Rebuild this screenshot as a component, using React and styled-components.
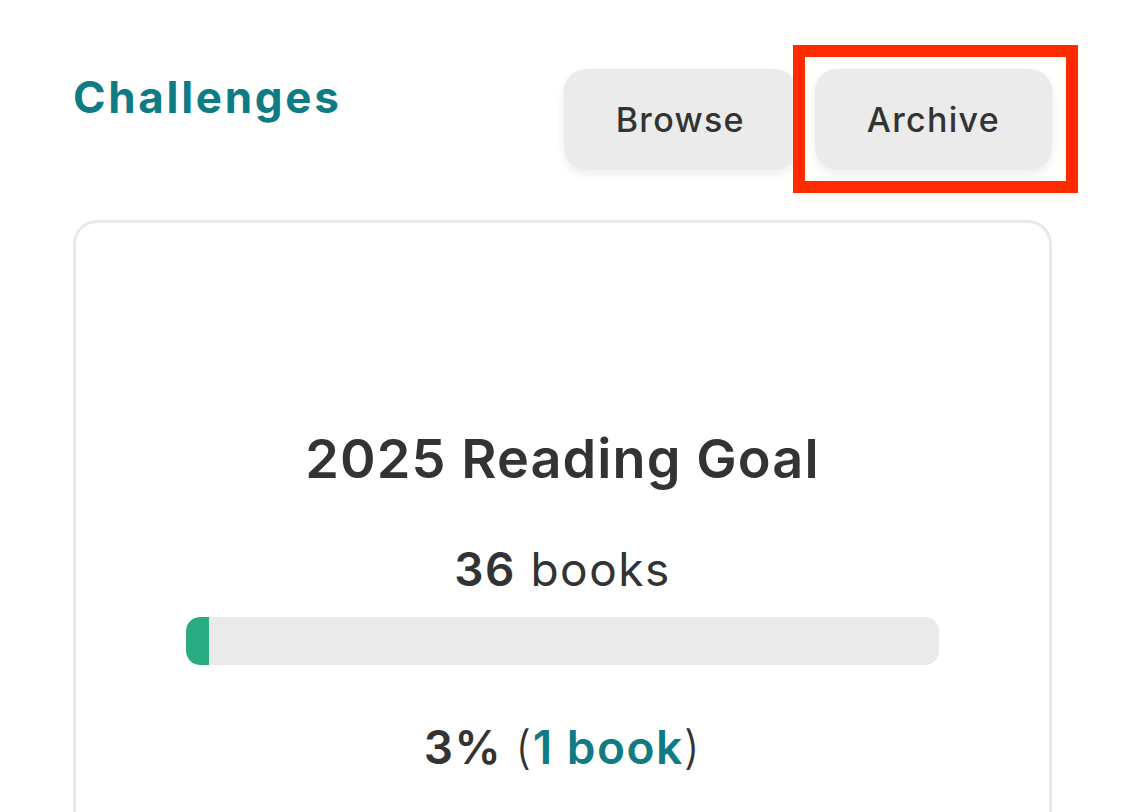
import React from "react";
import styled, { createGlobalStyle } from "styled-components";

const GlobalStyle = createGlobalStyle`
  html, body {
    margin: 0;
    padding: 0;
    background: #ffffff;
  }
  body {
    font-family: "Inter", "Noto Sans", sans-serif;
    color: #333333;
  }
`;

function App() {
  const goal = 36;
  const read = 1;
  const pct = Math.round((read / goal) * 100);

  return (
    <Page>
      <GlobalStyle />
      <Header>
        <Title>Challenges</Title>
        <Actions>
          <TabButton>Browse</TabButton>
          <TabButton highlighted>Archive</TabButton>
        </Actions>
      </Header>

      <Card>
        <GoalTitle>2025 Reading Goal</GoalTitle>
        <GoalCount>
          <strong>{goal}</strong> books
        </GoalCount>
        <Track>
          <Fill style={{ width: `${pct}%` }} />
        </Track>
        <Progress>
          {pct}% <Paren>(</Paren>
          <BookLink href="#">{read} book</BookLink>
          <Paren>)</Paren>
        </Progress>
      </Card>
    </Page>
  );
}

export default App;

const Page = styled.div`
  padding: 69px 73px 0;
  height: 812px;
  box-sizing: border-box;
  overflow: hidden;
`;

const Header = styled.header`
  display: flex;
  justify-content: space-between;
  align-items: flex-start;
`;

const Title = styled.h1`
  margin: 2px 0 0;
  font-size: 44px;
  line-height: 52px;
  font-weight: 700;
  letter-spacing: 2.7px;
  color: #0f7b84;
`;

const Actions = styled.div`
  display: flex;
  gap: 18px;
`;

const TabButton = styled.button`
  position: relative;
  height: 101px;
  padding: 0 52px;
  border: none;
  border-radius: 22px;
  background: #ebebeb;
  box-shadow: 0 4px 10px rgba(0, 0, 0, 0.07);
  font-family: "Inter", "Noto Sans", sans-serif;
  font-size: 34px;
  font-weight: 500;
  letter-spacing: 1.3px;
  color: #333333;
  cursor: pointer;

  &::after {
    content: "";
    display: ${(p) => (p.highlighted ? "block" : "none")};
    position: absolute;
    top: -24px;
    left: -22px;
    right: -26px;
    bottom: -23px;
    border: 12px solid #ff2a00;
    pointer-events: none;
  }
`;

const Card = styled.section`
  margin-top: 50px;
  border: 3px solid #e9e9e9;
  border-radius: 24px;
  padding: 204px 0 200px;
  display: flex;
  flex-direction: column;
  align-items: center;
`;

const GoalTitle = styled.h2`
  margin: 0;
  font-size: 54px;
  line-height: 64px;
  font-weight: 600;
  letter-spacing: 1.1px;
  color: #333333;
`;

const GoalCount = styled.p`
  margin: 50px 0 0;
  font-size: 46px;
  line-height: 56px;
  font-weight: 400;
  letter-spacing: 1.5px;
  color: #333333;

  strong {
    font-weight: 600;
  }
`;

const Track = styled.div`
  margin-top: 20px;
  width: 753px;
  height: 48px;
  border-radius: 14px;
  background: #eaeaea;
  overflow: hidden;
`;

const Fill = styled.div`
  height: 100%;
  background: #2aab82;
  border-radius: 14px 0 0 14px;
`;

const Progress = styled.p`
  margin: 54px 0 0;
  font-size: 46px;
  line-height: 56px;
  font-weight: 600;
  letter-spacing: 1.5px;
  color: #333333;
`;

const Paren = styled.span`
  font-weight: 300;
`;

const BookLink = styled.a`
  color: #0f7b84;
  text-decoration: none;
`;
